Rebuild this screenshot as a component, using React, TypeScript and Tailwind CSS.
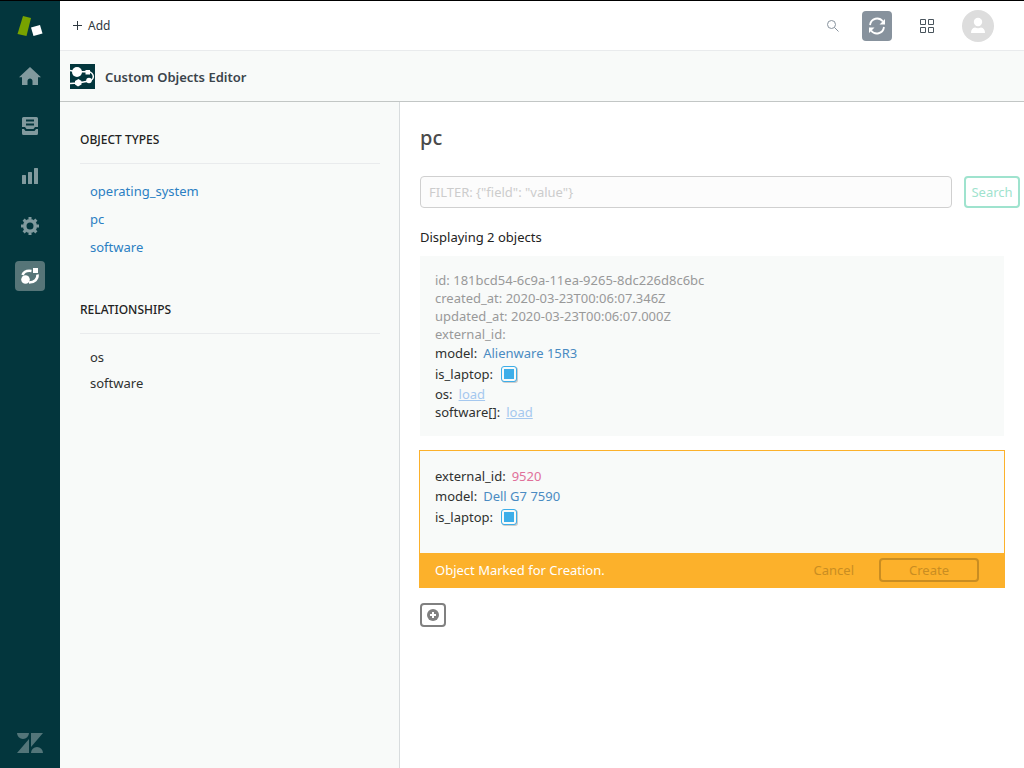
import { useState, type ReactNode } from "react";

const objectTypes = ["operating_system", "pc", "software"];
const relationships = ["os", "software"];

const metaFields = [
  { name: "id", value: "181bcd54-6c9a-11ea-9265-8dc226d8c6bc" },
  { name: "created_at", value: "2020-03-23T00:06:07.346Z" },
  { name: "updated_at", value: "2020-03-23T00:06:07.000Z" },
  { name: "external_id", value: "" },
];

export default function App() {
  return (
    <div className="flex min-h-screen border-t border-black bg-white font-['Noto_Sans',sans-serif] text-sm text-[#2f3130]">
      <NavRail />
      <div className="flex min-w-0 flex-1 flex-col">
        <TopBar />
        <div className="flex h-[51px] items-center gap-2.5 border-b border-[#c2c6c5] bg-[#f8faf9] px-2.5">
          <AppLogo />
          <h1 className="pt-0.5 text-[13px] font-semibold text-[#3b444b]">
            Custom Objects Editor
          </h1>
        </div>
        <div className="flex flex-1">
          <TypesPanel />
          <ObjectsPanel />
        </div>
      </div>
    </div>
  );
}

const NavRail = () => (
  <nav className="flex w-15 shrink-0 flex-col items-center bg-[#03363d] pb-2.5">
    <a href="#" aria-label="Dashboard" className="flex h-[50px] items-center">
      <svg className="h-[26px] w-[26px]" viewBox="0 0 26 26">
        <path d="M6 3L14 5L9.500 23L0.500 21Z" fill="#78a300" />
        <path d="M14 14.500L23 12L25.500 20.500L16.500 23Z" fill="#fff" />
      </svg>
    </a>
    <RailLink label="Home">
      <path d="M13 4L2 14.200H5V22H10.500V18C10.500 14.600 15.500 14.600 15.500 18V22H21V14.200H24Z" />
    </RailLink>
    <RailLink label="Views">
      <path
        fillRule="evenodd"
        d="M6.500 4H19.500Q21 4 21 5.500V14H18L16.500 16H9.500L8 14H5V5.500Q5 4 6.500 4ZM9 6.500V8.500H17V6.500ZM9 10.500V12.500H17V10.500Z"
      />
      <path d="M5 16H7L8.500 18H17.500L19 16H21V20.500Q21 22 19.500 22H6.500Q5 22 5 20.500Z" />
    </RailLink>
    <RailLink label="Reporting">
      <rect x="5" y="12" width="4" height="9" rx="0.500" />
      <rect x="11" y="9" width="4" height="12" rx="0.500" />
      <rect x="17" y="5" width="4" height="16" rx="0.500" />
    </RailLink>
    <RailLink label="Admin">
      <circle
        cx="13"
        cy="13"
        r="5.300"
        fill="none"
        stroke="currentColor"
        strokeWidth="3.600"
      />
      <path
        d="M13 4V6.500M13 19.500V22M4 13H6.500M19.500 13H22M6.600 6.600L8.400 8.400M17.600 17.600L19.400 19.400M6.600 19.400L8.400 17.600M17.600 8.400L19.400 6.600"
        stroke="currentColor"
        strokeWidth="3"
      />
    </RailLink>
    <a
      href="#"
      aria-label="Custom Objects"
      aria-current="page"
      className="mt-2.5 flex h-[30px] w-[30px] items-center justify-center rounded bg-[#567578] text-white"
    >
      <svg className="h-[22px] w-[22px]" viewBox="0 0 22 22">
        <path
          d="M3.500 10C5 6.500 8 5.300 12.500 6M18.500 9.500C19 14 15.500 17.500 10 17.500"
          fill="none"
          stroke="currentColor"
          strokeWidth="2.600"
        />
        <circle cx="6.500" cy="14.500" r="4.300" fill="currentColor" />
        <path d="M14 3H19V8H14Z" fill="currentColor" />
      </svg>
    </a>
    <svg
      className="mt-auto h-[26px] w-[26px] text-[#537579]"
      viewBox="0 0 26 26"
      fill="currentColor"
    >
      <path d="M0 1H12A6 6 0 0 1 0 1ZM12 7V21H0ZM14 1H26L14 15ZM14 21A6 6 0 0 1 26 21Z" />
    </svg>
  </nav>
);

const RailLink = ({
  label,
  children,
}: {
  label: string;
  children: ReactNode;
}) => (
  <a
    href="#"
    aria-label={label}
    className="flex h-[50px] items-center text-[#819a9e]"
  >
    <svg className="h-[26px] w-[26px]" viewBox="0 0 26 26" fill="currentColor">
      {children}
    </svg>
  </a>
);

const TopBar = () => (
  <header className="flex h-[50px] items-center justify-between border-b border-[#e9ebed] pr-[30px] pl-3">
    <button className="flex items-center gap-[5px] text-xs text-[#2f3941]">
      <svg className="h-[11px] w-[11px]" viewBox="0 0 11 11">
        <path d="M5.500 1V10M1 5.500H10" stroke="currentColor" />
      </svg>
      Add
    </button>
    <div className="flex items-center">
      <button aria-label="Search" className="mr-[22px] text-[#87929d]">
        <svg className="h-3.5 w-3.5" viewBox="0 0 14 14" fill="none">
          <circle cx="5.500" cy="5.500" r="4" stroke="currentColor" />
          <path d="M8.500 8.500L12.500 12.500" stroke="currentColor" />
        </svg>
      </button>
      <button
        aria-label="Refresh"
        className="mr-[26px] flex h-[30px] w-[30px] items-center justify-center rounded bg-[#87929d] text-white"
      >
        <svg className="h-[18px] w-[18px]" viewBox="0 0 18 18" fill="none">
          <path
            d="M2 8C3 1 11 -0.500 15 4.500M16 10C15 17 7 18.500 3 13.500"
            stroke="currentColor"
            strokeWidth="1.800"
          />
          <path d="M17 2V7.500H11.500ZM1 16V10.500H6.500Z" fill="currentColor" />
        </svg>
      </button>
      <button aria-label="Products" className="mr-[26px] text-[#49545c]">
        <svg className="h-[18px] w-[18px]" viewBox="0 0 18 18" fill="none">
          <path
            d="M2.500 2.500H7.500V7.500H2.500ZM10.500 2.500H15.500V7.500H10.500ZM2.500 10.500H7.500V15.500H2.500ZM10.500 10.500H15.500V15.500H10.500Z"
            stroke="currentColor"
          />
        </svg>
      </button>
      <button aria-label="Profile">
        <svg className="h-8 w-8" viewBox="0 0 32 32" fill="#fff">
          <circle cx="16" cy="16" r="16" fill="#ddd" />
          <circle cx="16" cy="12" r="4.200" />
          <path d="M9 23C9 19.500 10.500 18 13 17.500Q16 19 19 17.500C21.500 18 23 19.500 23 23Z" />
        </svg>
      </button>
    </div>
  </header>
);

const AppLogo = () => (
  <svg className="h-[25px] w-[25px] shrink-0" viewBox="0 0 25 25">
    <path d="M0 0H25V25H0Z" fill="#03363d" />
    <path
      d="M0 6.500L7 8L18 7.500C21.500 8 23.500 10.500 23.300 13C23 15.500 21.500 16.500 19 17L8 19L0 19.500"
      fill="none"
      stroke="#fff"
      strokeWidth="1.500"
    />
    <circle cx="7" cy="8" r="5" fill="#fff" />
    <path
      d="M15.500 6H20V10.500H15.500ZM5 17L8.500 15L11.500 17L11.500 20.500L8 22.500L5 20.500Z"
      fill="#fff"
    />
    <circle cx="19" cy="16.500" r="2.800" fill="#fff" />
  </svg>
);

const TypesPanel = () => (
  <aside className="w-[340px] shrink-0 border-r border-[#d8dcde] bg-[#f8faf9] px-5 pr-[19px] pt-7">
    <h2 className="border-b border-[#e9ebed] pb-[13px] text-xs leading-5 font-medium text-[#222]">
      OBJECT TYPES
    </h2>
    <ul className="px-2.5 pt-[13px] text-[13px] leading-7 text-[#2b7fc3]">
      {objectTypes.map((type) => (
        <li key={type}>
          <a href="#">{type}</a>
        </li>
      ))}
    </ul>
    <h2 className="mt-[39px] border-b border-[#e9ebed] pb-[13px] text-xs leading-5 font-medium text-[#222]">
      RELATIONSHIPS
    </h2>
    <ul className="px-2.5 pt-2.5 text-[13px] leading-[26px]">
      {relationships.map((name) => (
        <li key={name}>{name}</li>
      ))}
    </ul>
  </aside>
);

const ObjectsPanel = () => {
  const [filter, setFilter] = useState("");

  return (
    <main className="min-w-0 flex-1 px-5 pt-[22px] text-[13px]">
      <h2 className="text-xl leading-7 font-medium text-[#4a4a4a]">pc</h2>
      <form
        className="-mr-4 mt-6 flex gap-3"
        onSubmit={(e) => e.preventDefault()}
      >
        <input
          aria-label="Filter"
          className="h-8 min-w-0 flex-1 rounded border border-[#d0d0d0] bg-[#fcfcfc] px-2 outline-none placeholder:text-[#ccc]"
          placeholder={'FILTER: {"field": "value"}'}
          value={filter}
          onChange={(e) => setFilter(e.target.value)}
        />
        <button className="h-8 w-14 rounded border-2 border-[#9fe3ce] text-[13px] text-[#9fe3ce]">
          Search
        </button>
      </form>
      <p className="mt-5 leading-[18px] text-[#222]">Displaying 2 objects</p>

      <section className="mt-2.5 h-[180px] bg-[#f8faf9] px-[15px] pt-[15px] leading-[18px]">
        {metaFields.map(({ name, value }) => (
          <p key={name} className="text-[#999]">
            {name}: {value}
          </p>
        ))}
        <Field name="model">
          <span className="text-[#4a8bc2]">Alienware 15R3</span>
        </Field>
        <LaptopField id="alienware-laptop" />
        <LoadField name="os" />
        <LoadField name="software[]" />
      </section>

      <section className="-mx-px mt-3.5 border border-[#fcb12b] bg-[#f8faf9]">
        <div className="h-[102px] px-[15px] pt-[15px]">
          <Field name="external_id">
            <span className="text-[#e0709a]">9520</span>
          </Field>
          <Field name="model">
            <span className="text-[#4a8bc2]">Dell G7 7590</span>
          </Field>
          <LaptopField id="dell-laptop" />
        </div>
        <div className="flex h-[34px] items-center bg-[#fcb12b] pr-[25px] pl-[15px]">
          <p className="flex-1 text-white">Object Marked for Creation.</p>
          <button className="mr-[25px] text-[#c98d22]">Cancel</button>
          <button className="h-6 w-[100px] rounded border-2 border-[#c98d22] leading-5 text-[#c98d22]">
            Create
          </button>
        </div>
      </section>

      <button
        aria-label="Add object"
        className="mt-[15px] flex h-6 w-[26px] items-center justify-center rounded border-2 border-[#808080] text-[#808080]"
      >
        <svg className="h-3 w-3" viewBox="0 0 12 12">
          <circle cx="6" cy="6" r="6" fill="currentColor" />
          <path d="M6 3V9M3 6H9" stroke="#fff" strokeWidth="2" />
        </svg>
      </button>
    </main>
  );
};

const Field = ({ name, children }: { name: string; children: ReactNode }) => (
  <div className="flex gap-1.5 leading-5">
    <span>{name}:</span>
    {children}
  </div>
);

const LaptopField = ({ id }: { id: string }) => {
  const [checked, setChecked] = useState(true);

  return (
    <div className="flex h-[22px] items-center gap-2">
      <label htmlFor={id}>is_laptop:</label>
      <input
        id={id}
        type="checkbox"
        checked={checked}
        onChange={() => setChecked(!checked)}
        className="h-4 w-4 appearance-none rounded-[3px] border border-[#3daee9] bg-white p-0.5 shadow-[1px_1px_0_#ccc] checked:bg-[#3daee9] checked:bg-clip-content"
      />
    </div>
  );
};

const LoadField = ({ name }: { name: string }) => (
  <div className="flex gap-1.5 leading-[18px]">
    <span>{name}:</span>
    <a href="#" className="text-[#a5c8ef] underline">
      load
    </a>
  </div>
);
